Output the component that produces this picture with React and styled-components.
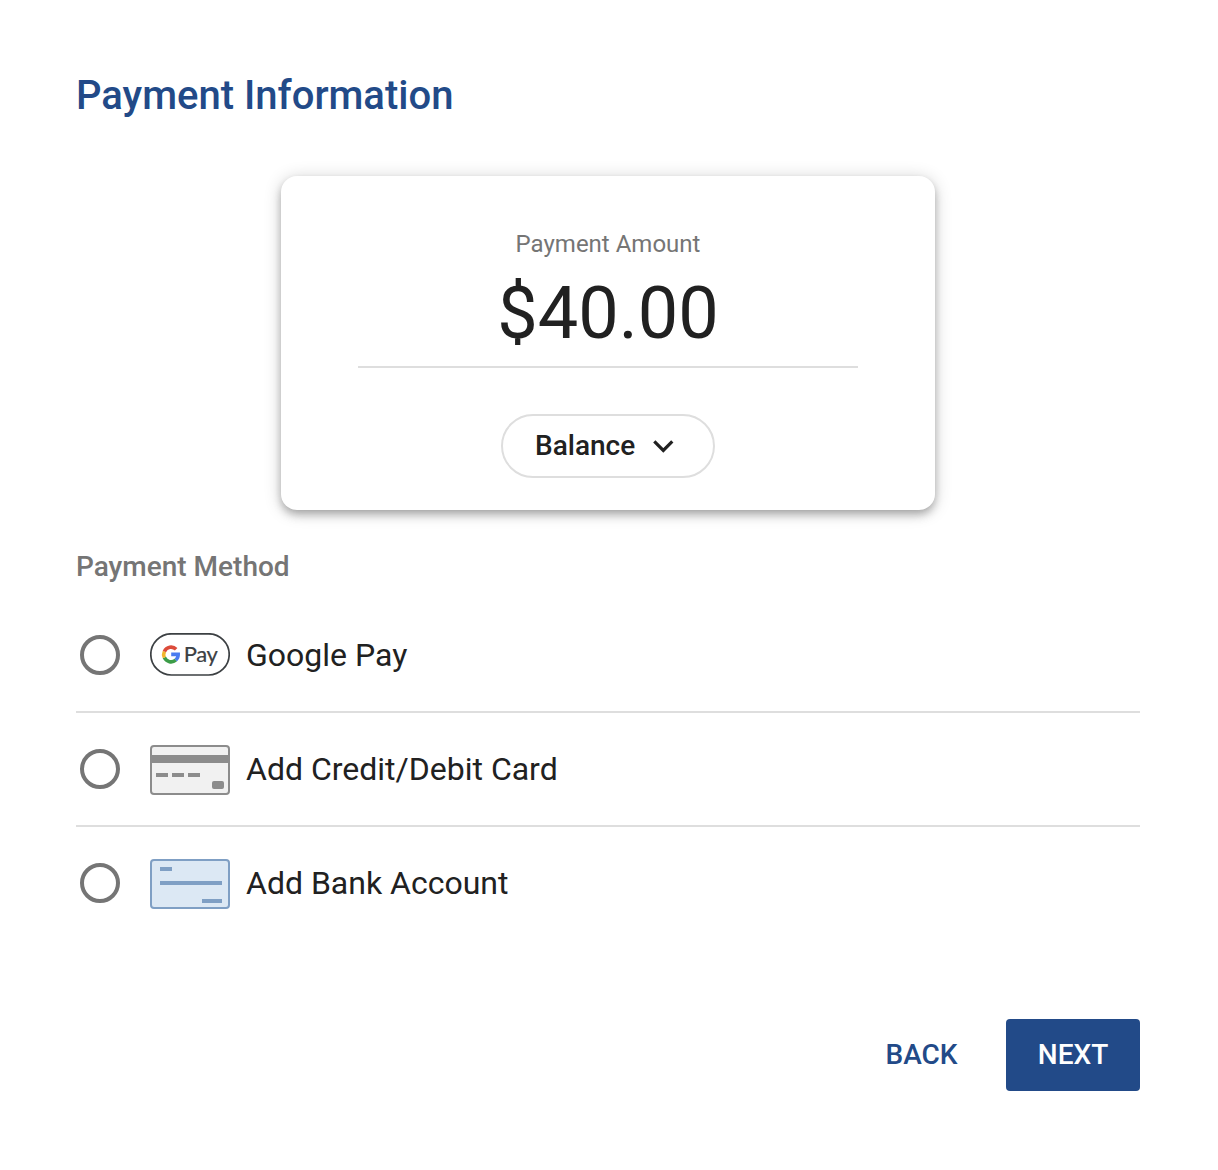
import React, { useState } from "react";
import styled, { createGlobalStyle } from "styled-components";

const GlobalStyle = createGlobalStyle`
  *, *::before, *::after { box-sizing: border-box; }
  body {
    margin: 0;
    background: #fff;
    color: #212121;
    font-family: Roboto, "Liberation Sans", sans-serif;
  }
  button { font-family: inherit; margin: 0; cursor: pointer; }
`;

const Page = styled.main`
  width: 1218px;
  height: 1170px;
  padding: 72px 78px 0 76px;
  display: flex;
  flex-direction: column;
`;

const Title = styled.h1`
  margin: 0 0 56px;
  font-size: 40px;
  line-height: 48px;
  font-weight: 500;
  color: #224a88;
`;

const AmountCard = styled.section`
  align-self: center;
  width: 654px;
  height: 334px;
  padding-top: 52px;
  border-radius: 16px;
  background: #fff;
  box-shadow: 0 4px 8px -2px rgba(0, 0, 0, 0.2), 0 6px 10px rgba(0, 0, 0, 0.12), 0 2px 17px rgba(0, 0, 0, 0.19);
  display: flex;
  flex-direction: column;
  align-items: center;
`;

const AmountLabel = styled.span`
  font-size: 24px;
  line-height: 32px;
  color: #757575;
`;

const Amount = styled.div`
  width: 500px;
  height: 108px;
  padding-top: 10px;
  border-bottom: 2px solid #dedede;
  text-align: center;
  font-size: 72px;
  line-height: 88px;
`;

const Pill = styled.button`
  width: 214px;
  height: 64px;
  margin-top: 46px;
  padding: 0 39px 2px 32px;
  border: 2px solid #dedede;
  border-radius: 32px;
  background: #fff;
  color: #212121;
  font-size: 28px;
  font-weight: 500;
  display: flex;
  align-items: center;
  justify-content: space-between;
`;

const SectionTitle = styled.h2`
  margin: 40px 0 16px;
  font-size: 28px;
  line-height: 33px;
  font-weight: 500;
  color: #757575;
`;

const MethodList = styled.div`
  display: flex;
  flex-direction: column;
`;

const Method = styled.label`
  height: 114px;
  padding-left: 4px;
  border-bottom: 2px solid ${(p) => (p.$last ? "transparent" : "#dedede")};
  display: flex;
  align-items: center;
  font-size: 32px;
  cursor: pointer;
`;

const Radio = styled.input`
  appearance: none;
  width: 40px;
  height: 40px;
  margin: 0 30px 0 0;
  border: 4px solid #757575;
  border-radius: 50%;
  cursor: pointer;
  &:checked {
    border-color: #224a88;
    background: radial-gradient(circle, #224a88 10px, transparent 11px);
  }
`;

const MethodIcon = styled.span`
  width: 80px;
  margin: ${(p) => p.$offset}px 16px 0 0;
  display: flex;
`;

const Actions = styled.footer`
  margin-top: 78px;
  display: flex;
  justify-content: flex-end;
  gap: 16px;
`;

const Action = styled.button`
  width: ${(p) => p.$width}px;
  height: 72px;
  padding: 0 0 1px;
  border: 0;
  border-radius: 4px;
  background: ${(p) => (p.$primary ? "#224a88" : "transparent")};
  color: ${(p) => (p.$primary ? "#fff" : "#224a88")};
  font-size: 28px;
  font-weight: 500;
`;

const Chevron = () => (
  <svg width="22" height="16" viewBox="0 0 22 16" fill="none">
    <path d="M2 4.2 11 13.2 20 4.2" transform="translate(.3 .2)" stroke="#212121" strokeWidth="3.2" />
  </svg>
);

const GooglePayMark = () => (
  <svg width="80" height="43" viewBox="0 0 80 43">
    <rect x=".8" y=".8" width="78.4" height="41.2" rx="20.6" fill="#fff" stroke="#3c4043" strokeWidth="1.7" />
    <g fill="none" strokeWidth="3.6">
      <path stroke="#4a7cf0" d="M21.2 21.4H28.2A7.3 7.3 0 0 1 25.7 27.1" />
      <path stroke="#3c9c48" d="M25.7 27.1A7.3 7.3 0 0 1 14.38 24.59" />
      <path stroke="#f2b52b" d="M14.38 24.59A7.3 7.3 0 0 1 14.38 18.41" />
      <path stroke="#dc4b3a" d="M14.38 18.41A7.3 7.3 0 0 1 26.16 16.34" />
    </g>
    <text x="33.8" y="29.2" textLength="34" fontFamily="Lato, sans-serif" fontSize="22" fill="#3c4043" stroke="#3c4043" strokeWidth=".2">Pay</text>
  </svg>
);

const CardMark = () => (
  <svg width="80" height="50" viewBox="0 0 80 50" fill="#8c8c8c">
    <rect x="1" y="1" width="78" height="48" rx="3" fill="#f1f1f1" stroke="#8c8c8c" strokeWidth="2" />
    <rect x="1" y="10" width="78" height="8" />
    <path d="M6 28h12v4H6zM22 28h12v4H22zM38 28h12v4H38z" />
    <rect x="62" y="36" width="12" height="8" rx="2" />
  </svg>
);

const CheckMark = () => (
  <svg width="80" height="50" viewBox="0 0 80 50" fill="#7f9fc4">
    <rect x="1" y="1" width="78" height="48" rx="3" fill="#dce8f4" stroke="#7f9fc4" strokeWidth="2" />
    <path d="M10 8h12v4H10zM10 22h62v4H10zM52 40h20v4H52z" />
  </svg>
);

const methods = [
  { id: "gpay", name: "Google Pay", Mark: GooglePayMark, offset: -1 },
  { id: "card", name: "Add Credit/Debit Card", Mark: CardMark, offset: 2 },
  { id: "bank", name: "Add Bank Account", Mark: CheckMark, offset: 2 },
];

export default function App() {
  const [selected, setSelected] = useState(null);
  return (
    <>
      <GlobalStyle />
      <Page>
        <Title>Payment Information</Title>
        <AmountCard>
          <AmountLabel>Payment Amount</AmountLabel>
          <Amount>$40.00</Amount>
          <Pill>
            Balance
            <Chevron />
          </Pill>
        </AmountCard>
        <SectionTitle>Payment Method</SectionTitle>
        <MethodList>
          {methods.map(({ id, name, Mark, offset }, i) => (
            <Method key={id} $last={i === methods.length - 1}>
              <Radio type="radio" name="method" checked={selected === id} onChange={() => setSelected(id)} />
              <MethodIcon $offset={offset}>
                <Mark />
              </MethodIcon>
              {name}
            </Method>
          ))}
        </MethodList>
        <Actions>
          <Action $width={137}>BACK</Action>
          <Action $primary $width={134}>NEXT</Action>
        </Actions>
      </Page>
    </>
  );
}
